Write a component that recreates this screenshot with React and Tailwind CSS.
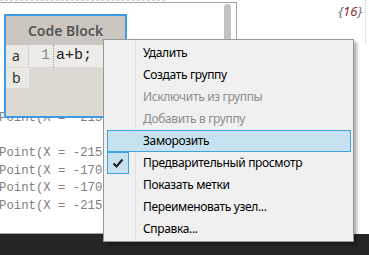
import React from 'react';

// only the part left of the menu is visible; lines hidden behind the node are left empty
const lines = [
  '',
  '',
  '',
  'Point(X = -215',
  '',
  'Point(X = -215',
  'Point(X = -170',
  'Point(X = -170',
  'Point(X = -215',
];

const items = [
  { label: 'Удалить' },
  { label: 'Создать группу' },
  { label: 'Исключить из группы', disabled: true },
  { label: 'Добавить в группу', disabled: true },
  { label: 'Заморозить', hover: true },
  { label: 'Предварительный просмотр', checked: true },
  { label: 'Показать метки' },
  { label: 'Переименовать узел...' },
  { label: 'Справка...' },
];

const ui = { fontFamily: '"Noto Sans", "Open Sans", sans-serif' };
const mono = { fontFamily: '"Liberation Mono", "DejaVu Sans Mono", monospace' };

const CodeBlockNode = () => (
  <div className="absolute left-[4px] top-[14px] w-[123px] h-[104px] border-2 border-[#3c9be4] bg-[#dcd9d3] flex flex-col">
    <div className="h-[29px] bg-[#cbc7c0] flex items-center justify-center text-[14px] font-semibold text-[#555]" style={ui}>
      Code Block
    </div>
    <div className="flex h-[22px]">
      <div className="w-[23px] bg-[#ebe9e5] border-r border-[#d6d3ce] pl-[6px] text-[14px] leading-[22px] text-[#333]" style={ui}>a</div>
      <div className="flex-1 flex bg-[#eeece9]">
        <div className="w-[21px] text-right text-[15px] leading-[22px] text-[#8a8a8a]" style={mono}>1</div>
        <div className="ml-[3px] w-px border-l border-dotted border-[#9a9a9a]" />
        <div className="pl-[2px] text-[15px] leading-[22px] text-[#222]" style={mono}>a+b;</div>
      </div>
    </div>
    <div className="flex h-[21px]">
      <div className="w-[23px] bg-[#ebe9e5] border-t border-[#dcd9d3] pl-[6px] text-[14px] leading-[20px] text-[#333]" style={ui}>b</div>
    </div>
  </div>
);

const ContextMenu = () => (
  <div className="absolute left-[103px] top-[39px] w-[251px] h-[203px] bg-[#f0f0f0] border border-[#979797] shadow-[3px_3px_3px_rgba(0,0,0,0.3)] pt-[2px] pb-px" style={ui}>
    <div className="absolute left-[31px] top-0 bottom-0 w-px bg-[#e2e2e2]" />
    {items.map((it) => (
      <div
        key={it.label}
        className={`relative ml-[3px] mr-[2px] h-[22px] flex items-center pl-[35px] text-[12px] tracking-[-0.35px] border ${
          it.hover ? 'bg-[#c6e2f1] border-[#3fa3dc]' : 'border-transparent'
        } ${it.disabled ? 'text-[#8d8d8d]' : 'text-black'}`}
      >
        {it.checked && (
          <div className="absolute left-[-1px] top-[-1px] w-[22px] h-[22px] bg-[#c6e2f1] border border-[#3fa3dc] flex items-center justify-center">
            <svg width="12" height="11" viewBox="0 0 12 11">
              <path d="M1.5 5.5 L4.5 8.5 L10.5 1.5" fill="none" stroke="#222" strokeWidth="2.2" />
            </svg>
          </div>
        )}
        {it.label}
      </div>
    ))}
  </div>
);

export default function App() {
  return (
    <div className="relative w-[369px] h-[255px] overflow-hidden bg-white flex flex-col">
      <div className="h-[234px] flex">
        <div className="w-[237px] flex flex-col">
          <div className="h-[2px] w-[165px] border-t border-dashed border-[#d0d0d0]" />
          <div className="relative flex-1 border-t border-r border-b border-[#a5a5a5] pt-[54px] overflow-hidden">
            <div className="-ml-px text-[12.3px] leading-[17.6px] text-[#7f7f7f] whitespace-pre" style={mono}>
              {lines.map((l, i) => (
                <div key={i} className="h-[17.6px]">{l}</div>
              ))}
            </div>
            <div className="absolute right-[5px] top-px w-[7px] h-[120px] rounded-full bg-[#c2c2c2]" />
          </div>
        </div>
        <div className="flex-1 flex justify-end">
          <div className="pt-[3px] pr-[3px] text-[13px] italic leading-[16px]" style={ui}>
            <span className="text-[#6a6a80]">{'{'}</span>
            <span className="text-[#8b2a2a]">16</span>
            <span className="text-[#6a6a80]">{'}'}</span>
          </div>
          <div className="h-[43px] w-px mr-[3px] border-r border-dotted border-[#c8c8d0]" />
        </div>
      </div>
      <div className="flex-1 bg-[#252525]" />
      <CodeBlockNode />
      <ContextMenu />
    </div>
  );
}
